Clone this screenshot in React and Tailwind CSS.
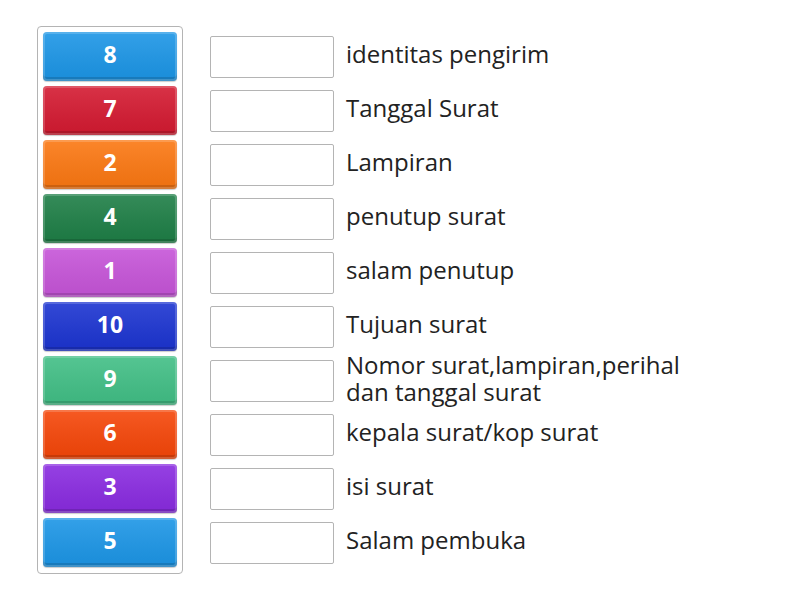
import React from 'react';

const tiles = [
  { n: '8', bg: 'bg-[#1d96e6]' },
  { n: '7', bg: 'bg-[#d41b32]' },
  { n: '2', bg: 'bg-[#fb7813]' },
  { n: '4', bg: 'bg-[#1f7f47]' },
  { n: '1', bg: 'bg-[#c655d8]' },
  { n: '10', bg: 'bg-[#1d35d1]' },
  { n: '9', bg: 'bg-[#42bf86]' },
  { n: '6', bg: 'bg-[#f5470a]' },
  { n: '3', bg: 'bg-[#8a2ce0]' },
  { n: '5', bg: 'bg-[#1d96e6]' },
];

const answers = [
  'identitas pengirim',
  'Tanggal Surat',
  'Lampiran',
  'penutup surat',
  'salam penutup',
  'Tujuan surat',
  'Nomor surat,lampiran,perihal dan tanggal surat',
  'kepala surat/kop surat',
  'isi surat',
  'Salam pembuka',
];

const Tile = ({ n, bg }) => (
  <div
    className={`${bg} h-[49px] pb-[4px] rounded-[4px] flex items-center justify-center text-white font-bold text-[23px] bg-gradient-to-b from-white/10 to-black/5 shadow-[inset_0_0_0_2px_rgba(255,255,255,0.18),inset_0_-4px_0_rgba(0,0,0,0.14),0_1px_1px_rgba(0,0,0,0.2)]`}
  >
    {n}
  </div>
);

export default function App() {
  return (
    <div
      className="w-[800px] h-[600px] bg-white flex items-start pt-[26px] pl-[37px]"
      style={{ fontFamily: '"Open Sans", "Liberation Sans", sans-serif' }}
    >
      {/* Number tiles */}
      <div className="w-[146px] border border-[#b4b4b4] rounded-[4px] px-[5px] py-[6px] pt-[5px] flex flex-col gap-[5px]">
        {tiles.map((t) => (
          <Tile key={t.n} {...t} />
        ))}
      </div>

      {/* Answer slots */}
      <div className="ml-[27px] mt-[6px] flex flex-col gap-[5px]">
        {answers.map((a) => (
          <div key={a} className="h-[49px] flex items-center">
            <div className="w-[124px] h-[42px] border border-[#b4b4b4] rounded-[2px] bg-white shrink-0" />
            <div className="ml-[12px] w-[360px] text-[24px] leading-[27px] text-[#222] -mt-[6px]">
              {a}
            </div>
          </div>
        ))}
      </div>
    </div>
  );
}
